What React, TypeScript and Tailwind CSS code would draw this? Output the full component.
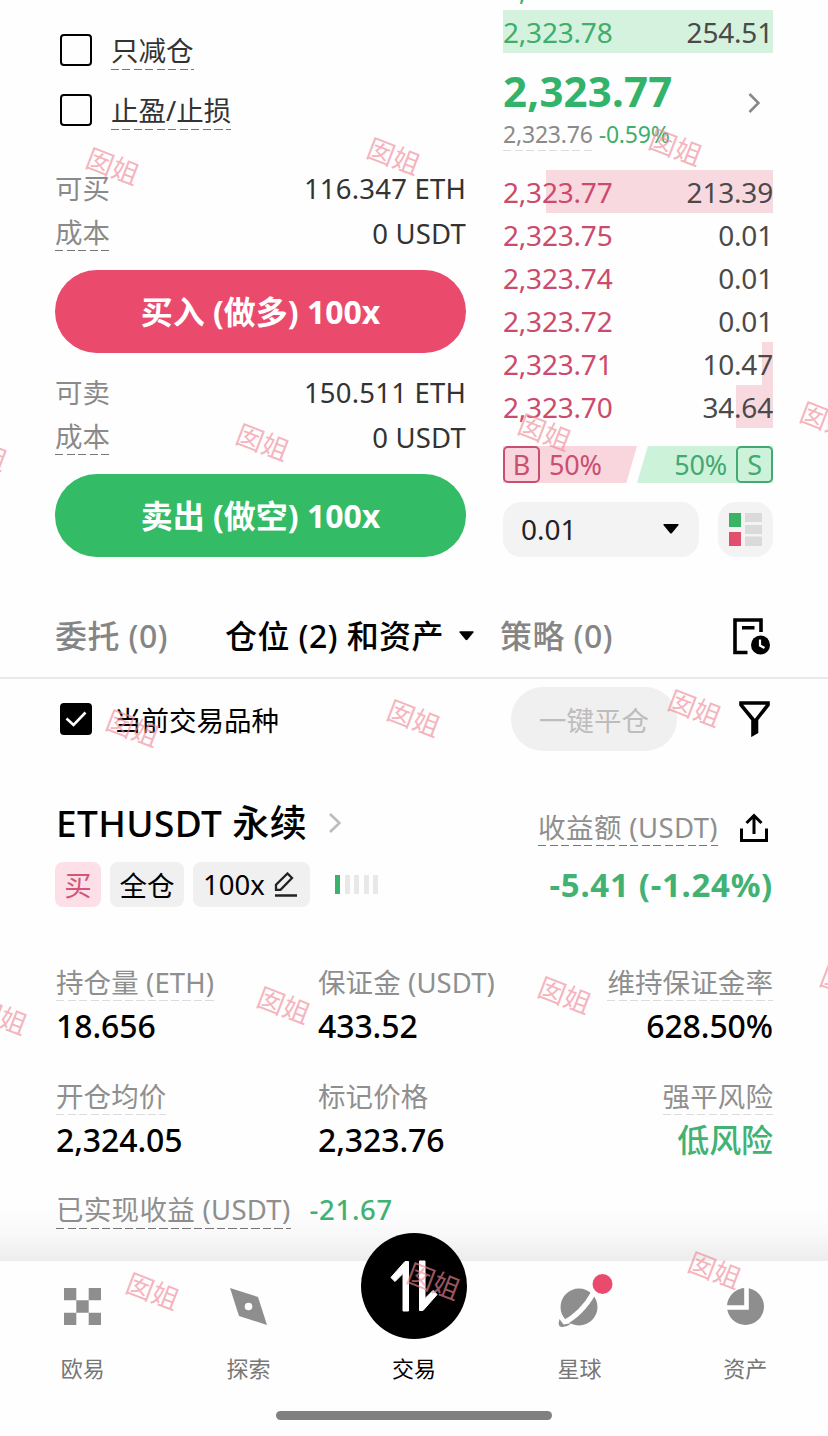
import clsx from 'clsx'
import type { ReactNode } from 'react'

const asks = [
  { price: '2,323.77', amount: '213.39', depth: 'w-[227px]' },
  { price: '2,323.75', amount: '0.01', depth: 'w-0' },
  { price: '2,323.74', amount: '0.01', depth: 'w-0' },
  { price: '2,323.72', amount: '0.01', depth: 'w-0' },
  { price: '2,323.71', amount: '10.47', depth: 'w-[11px]' },
  { price: '2,323.70', amount: '34.64', depth: 'w-[37px]' },
]

const marks = [
  [113, 166], [394, 156], [676, 147],
  [-19, 452], [263, 442], [545, 432], [827, 420],
  [133, 728], [414, 718], [695, 708],
  [1, 1016], [284, 1005], [565, 995], [847, 984],
  [153, 1291], [434, 1281], [715, 1270],
]

function Dashed({ children, faint, className }: { children: ReactNode; faint?: boolean; className?: string }) {
  return (
    <span className={clsx('relative inline-block whitespace-nowrap', className)}>
      {children}
      <span
        className={clsx(
          'absolute inset-x-0 bottom-0 h-[1.5px]',
          faint
            ? 'bg-[repeating-linear-gradient(90deg,#dcdcdc_0_8px,transparent_8px_11.5px)]'
            : 'bg-[repeating-linear-gradient(90deg,#777_0_8px,transparent_8px_11.5px)]',
        )}
      />
    </span>
  )
}

function CheckRow({ label }: { label: string }) {
  return (
    <div className="flex h-[60px] items-center pl-[5px]">
      <span className="size-[32px] rounded-[4px] border-[2.5px] border-black" />
      <Dashed className="ml-[19px] h-10 text-[27.5px] leading-[42px] text-[#333]">{label}</Dashed>
    </div>
  )
}

function InfoRow({ label, value, dashed }: { label: string; value: string; dashed?: boolean }) {
  return (
    <div className="flex h-[45px] items-center justify-between">
      {dashed ? (
        <Dashed className="h-[35px] text-[27.5px] leading-[33px] text-[#8a8a8a]">{label}</Dashed>
      ) : (
        <span className="text-[27.5px] leading-[35px] text-[#8a8a8a]">{label}</span>
      )}
      <span className="text-[27.5px] leading-[35px] tracking-[0.2px] text-[#333]">{value}</span>
    </div>
  )
}

function BookRow({ price, amount, depth, bid }: { price: string; amount: string; depth: string; bid?: boolean }) {
  return (
    <div className="relative flex h-[43px] shrink-0 items-center justify-between text-[28px] tracking-[-0.2px]">
      <span className={clsx('absolute inset-y-0 right-0', depth, bid ? 'bg-[#d5f2df]' : 'bg-[#f9d9e0]')} />
      <span className={clsx('relative', bid ? 'text-[#3fae6c]' : 'text-[#cc4a6c]')}>{price}</span>
      <span className="relative text-[#4a4a4a]">{amount}</span>
    </div>
  )
}

function Caret({ className }: { className: string }) {
  return (
    <svg className={className} viewBox="0 0 16 10">
      <path d="M1.2 0h13.6q1.5 0 .6 1.2L9 9q-1 1-2 0L.6 1.2Q-.3 0 1.2 0z" />
    </svg>
  )
}

function OrderForm() {
  return (
    <section className="flex w-[411px] flex-col pt-5">
      <CheckRow label="只减仓" />
      <CheckRow label="止盈/止损" />
      <div className="mt-[26px]">
        <InfoRow label="可买" value="116.347 ETH" />
        <InfoRow label="成本" value="0 USDT" dashed />
      </div>
      <button className="mt-[14px] h-[83px] rounded-full bg-[#ea4b6d] text-[32px] font-bold text-white">
        买入 (做多) 100x
      </button>
      <div className="mt-[17px]">
        <InfoRow label="可卖" value="150.511 ETH" />
        <InfoRow label="成本" value="0 USDT" dashed />
      </div>
      <button className="mt-[14px] h-[83px] rounded-full bg-[#33bb66] text-[32px] font-bold text-white">
        卖出 (做空) 100x
      </button>
    </section>
  )
}

function OrderBook() {
  return (
    <section className="-mt-[33px] flex w-[270px] flex-col">
      <BookRow price="2,323.79" amount="1.20" depth="w-0" bid />
      <BookRow price="2,323.78" amount="254.51" depth="w-[270px]" bid />
      <div className="flex h-[117px] items-center justify-between">
        <div className="flex h-full flex-col">
          <span className="mt-[15px] h-[48px] text-[42px] leading-[46px] font-bold tracking-[0.2px] text-[#33b369]">
            2,323.77
          </span>
          <div className="flex gap-[6px] text-[23px] tracking-[-0.2px]">
            <Dashed faint className="h-[35px] leading-[36px] text-[#8a8a8a]">2,323.76</Dashed>
            <span className="leading-[36px] text-[#3fae6c]">-0.59%</span>
          </div>
        </div>
        <svg className="mr-[13px] mb-[17px] h-5 w-3" viewBox="0 0 12 20" fill="none" stroke="#888" strokeWidth="2.6">
          <path d="M1.5 1l9 9-9 9" />
        </svg>
      </div>
      {asks.map((row) => (
        <BookRow key={row.price} {...row} />
      ))}
      <div className="mt-[18px] flex h-[37px] justify-between text-[27px] leading-[33px] tracking-[-0.2px]">
        <div className="flex w-[134px] items-center bg-[#f9d5dd] text-[#c94f70] [clip-path:polygon(0_0,100%_0,92%_100%,0_100%)]">
          <span className="flex size-[37px] items-center justify-center rounded-[5px] border-2 border-[#c94f70] pb-px">B</span>
          <span className="ml-[9px]">50%</span>
        </div>
        <div className="flex w-[136px] items-center justify-end bg-[#cdf2da] text-[#43a871] [clip-path:polygon(8%_0,100%_0,100%_100%,0_100%)]">
          <span className="mr-[9px]">50%</span>
          <span className="flex size-[37px] items-center justify-center rounded-[5px] border-2 border-[#43a871] pb-px">S</span>
        </div>
      </div>
      <div className="mt-[19px] flex justify-between">
        <div className="flex h-[55px] w-[196px] items-center justify-between rounded-[18px] bg-[#f3f3f3] pr-5 pb-px pl-[18px] text-[28px] leading-[55px] text-[#222]">
          0.01
          <Caret className="h-[10px] w-4" />
        </div>
        <div className="flex size-[55px] items-center justify-center rounded-[18px] bg-[#f3f3f3]">
          <svg className="size-[33px]" viewBox="0 0 33 33">
            <rect width="12" height="14" fill="#3bb366" />
            <rect y="19" width="12" height="14" fill="#e24e70" />
            <g fill="#dadada">
              <rect x="16" width="17" height="9" />
              <rect x="16" y="12" width="17" height="9" />
              <rect x="16" y="23.5" width="17" height="9.5" />
            </g>
          </svg>
        </div>
      </div>
    </section>
  )
}

function Tabs() {
  return (
    <div className="mt-10 flex h-[82px] shrink-0 items-center border-b-2 border-[#e9e9e9] px-[55px] pb-[3px] text-[32px] font-medium tracking-[0.4px] text-[#858585]">
      <span className="w-[170px] whitespace-nowrap">委托 (0)</span>
      <span className="w-[234px] whitespace-nowrap text-black">仓位 (2) 和资产</span>
      <Caret className="h-[10px] w-[15px]" />
      <span className="ml-[26px] whitespace-nowrap">策略 (0)</span>
      <svg className="mt-px mr-[3px] ml-auto size-[37px]" viewBox="0 0 37 37" fill="none" stroke="#000" strokeWidth="3.6">
        <path d="M28 14V2H2v32.5h12.500M9 9.700h12.500" />
        <circle cx="27.500" cy="27" r="9.500" fill="#000" stroke="none" />
        <path d="M27 21.500v6l4.500 2.500" stroke="#fff" strokeWidth="2.200" />
      </svg>
    </div>
  )
}

function Filters() {
  return (
    <div className="mt-[8px] flex h-16 shrink-0 items-center pr-[58px] pl-[60px]">
      <span className="flex size-[32px] items-center justify-center rounded-[4px] bg-black">
        <svg className="h-4 w-[22px]" viewBox="0 0 22 16" fill="none" stroke="#fff" strokeWidth="2.6">
          <path d="M1.5 7.5l7 6.5L20.5 1.5" />
        </svg>
      </span>
      <span className="ml-[22px] pt-[3px] text-[27.5px] text-black">当前交易品种</span>
      <button className="ml-auto h-16 w-[166px] rounded-full bg-[#f0f0f0] pt-[3px] text-[27.5px] text-[#bdbdbd]">
        一键平仓
      </button>
      <svg className="ml-[62px] h-9 w-[31px]" viewBox="0 0 31 36" fill="none" stroke="#000" strokeWidth="3.6">
        <path d="M2 2h27v1.800L17.500 18.500V31l-3.500 2V18.500L2 3.800z" />
      </svg>
    </div>
  )
}

function Stat({ label, value, className, dashed }: { label: string; value: string; className?: string; dashed?: boolean }) {
  return (
    <div className={clsx('flex flex-col', className)}>
      {dashed ? (
        <Dashed faint className="h-9 text-[27.5px] leading-[35px] tracking-[0.1px] text-[#8f8f8f]">{label}</Dashed>
      ) : (
        <span className="h-9 text-[27.5px] leading-[35px] tracking-[0.1px] text-[#8f8f8f]">{label}</span>
      )}
      <span className="mt-[3px] h-11 text-[32px] leading-[44px] font-medium tracking-[-0.1px]">{value}</span>
    </div>
  )
}

function Position() {
  return (
    <section className="flex shrink-0 flex-col pr-[55px] pl-14">
      <div className="mt-[46px] flex h-[52px] items-center">
        <h2 className="text-[37px] leading-[50px] font-medium tracking-[0.4px] whitespace-nowrap text-black">ETHUSDT 永续</h2>
        <svg className="ml-[22px] h-5 w-3" viewBox="0 0 12 20" fill="none" stroke="#bbb" strokeWidth="2.6">
          <path d="M1 1l9.5 9L1 19" />
        </svg>
        <Dashed className="mt-[8px] ml-auto h-[38px] text-[27.5px] leading-[39px] tracking-[0.4px] text-[#8f8f8f]">
          收益额 (USDT)
        </Dashed>
        <svg className="mt-[9px] mr-[5px] ml-[22px] h-[30px] w-7" viewBox="0 0 28 30" fill="none" stroke="#000" strokeWidth="3">
          <path d="M1.5 15.5v12h25v-12M14 21V3M6.5 10L14 2.5l7.500 7.500" />
        </svg>
      </div>
      <div className="mt-[13px] -ml-px flex h-[45px] items-center text-[27.5px]">
        <span className="flex h-full w-[46px] items-center justify-center rounded-[8px] bg-[#fde0e7] pt-[2px] text-[#d3557a]">买</span>
        <span className="ml-[9px] flex h-full w-[74px] items-center justify-center rounded-[8px] bg-[#f0f0f0] pt-[2px]">全仓</span>
        <span className="ml-[9px] flex h-full w-[117px] items-center rounded-[8px] bg-[#f0f0f0] pl-[10px]">
          100x
          <svg className="mb-px ml-[9px] h-[25px] w-[23px]" viewBox="0 0 23 25" fill="none" stroke="#222" strokeWidth="2.3">
            <path d="M1 23.500h22M2 17.800v-5L13.500 1.500l4.500 4.500L6.500 17.800z" />
          </svg>
        </span>
        <span className="ml-[25px] flex gap-[4.5px]">
          <i className="h-[19px] w-[5px] bg-[#3bb16c]" />
          <i className="h-[19px] w-[5px] bg-[#e8e8e8]" />
          <i className="h-[19px] w-[5px] bg-[#e8e8e8]" />
          <i className="h-[19px] w-[5px] bg-[#e8e8e8]" />
          <i className="h-[19px] w-[5px] bg-[#e8e8e8]" />
        </span>
        <span className="ml-auto text-[33px] leading-[43px] font-bold tracking-[0.7px] text-[#41b273]">-5.41 (-1.24%)</span>
      </div>
      <div className="mt-[58px] grid grid-cols-[262px_220px_1fr] gap-y-[31px] text-black">
        <Stat label="持仓量 (ETH)" value="18.656" className="items-start" dashed />
        <Stat label="保证金 (USDT)" value="433.52" className="items-start" />
        <Stat label="维持保证金率" value="628.50%" className="items-end" dashed />
        <Stat label="开仓均价" value="2,324.05" className="items-start" dashed />
        <Stat label="标记价格" value="2,323.76" className="items-start" />
        <Stat label="强平风险" value="低风险" className="items-end [&>span:last-child]:text-[#41b273]" dashed />
      </div>
      <div className="mt-[30px] flex text-[27.5px]">
        <Dashed className="h-[37px] leading-[35px] tracking-[0.3px] text-[#8f8f8f]">已实现收益 (USDT)</Dashed>
        <span className="ml-[19px] leading-[35px] font-medium tracking-[0.7px] text-[#41b273]">-21.67</span>
      </div>
    </section>
  )
}

function NavItem({ label, children, active }: { label: string; children: ReactNode; active?: boolean }) {
  return (
    <div className="flex flex-1 flex-col items-center">
      <div className="flex h-[91px] items-center justify-center">{children}</div>
      <span className={clsx('text-[22px] leading-[32px]', active ? 'text-black' : 'text-[#777]')}>{label}</span>
    </div>
  )
}

function BottomNav() {
  return (
    <nav className="relative mt-auto flex h-[175px] shrink-0 bg-[#fefefe]">
      <div className="pointer-events-none absolute inset-x-0 bottom-full h-[56px] bg-linear-to-b from-transparent via-black/2 to-black/7" />
      <NavItem label="欧易">
        <svg className="size-[37px]" viewBox="0 0 37 37" fill="#8e8e8e">
          <path d="M0 0h12.300v12.300H0zM24.700 0H37v12.300H24.700zM12.300 12.300h12.400v12.400H12.300zM0 24.700h12.300V37H0zM24.700 24.700H37V37H24.700z" />
        </svg>
      </NavItem>
      <NavItem label="探索">
        <svg className="size-[37px]" viewBox="0 0 37 37">
          <path d="M0 0l28 9 9 28-28-9z" fill="#8e8e8e" />
          <circle cx="18.5" cy="18.5" r="3.8" fill="#fff" />
        </svg>
      </NavItem>
      <NavItem label="交易" active>
        <span className="relative mb-[42px] flex size-[106px] shrink-0 items-center justify-center rounded-full bg-black">
          <svg className="h-[52px] w-[48px]" viewBox="0 0 48 52" fill="#fff" stroke="#fff" strokeLinejoin="round">
            <path d="M18.500 1.500v49.500h-5.500V13.500L5 21.500.9 17.500 15 1.500z" />
            <path d="M29.500 50.500V1h5.500v37.500l8-8 4.100 4L33 50.500z" />
          </svg>
        </span>
      </NavItem>
      <NavItem label="星球">
        <svg className="mr-px size-[56px] overflow-visible" viewBox="0 0 56 56">
          <circle cx="28" cy="28" r="18.5" fill="#8e8e8e" />
          <path d="M11 45Q31 35 43 13" fill="none" stroke="#fff" strokeWidth="5" />
          <path d="M8.500 40Q6 48.500 11.500 48q5-.5 10-4l-9 1.500z" fill="#8e8e8e" />
          <circle cx="51.5" cy="5" r="10" fill="#ea4b6d" />
        </svg>
      </NavItem>
      <NavItem label="资产">
        <svg className="size-[37px]" viewBox="0 0 37 37">
          <circle cx="18.5" cy="18.5" r="18.5" fill="#8e8e8e" />
          <path d="M19.500 0v19.500H0" fill="none" stroke="#fff" strokeWidth="4.6" />
        </svg>
      </NavItem>
      <span className="absolute bottom-4 left-1/2 h-[9px] w-[276px] -translate-x-1/2 rounded-full bg-[#808080]" />
    </nav>
  )
}

export default function App() {
  return (
    <main className="relative flex h-[1436px] w-[828px] flex-col overflow-hidden bg-[#fefefe] font-['Noto_Sans','Noto_Sans_CJK_SC',sans-serif]">
      <div className="flex h-[557px] shrink-0 justify-between px-[55px]">
        <OrderForm />
        <OrderBook />
      </div>
      <Tabs />
      <Filters />
      <Position />
      <BottomNav />
      {marks.map(([x, y]) => (
        <span
          key={`${x}-${y}`}
          className="pointer-events-none absolute -translate-1/2 rotate-[21deg] text-[27px] leading-none whitespace-nowrap text-[#f08a98]/65"
          style={{ left: x, top: y }}
        >
          囡姐
        </span>
      ))}
    </main>
  )
}
